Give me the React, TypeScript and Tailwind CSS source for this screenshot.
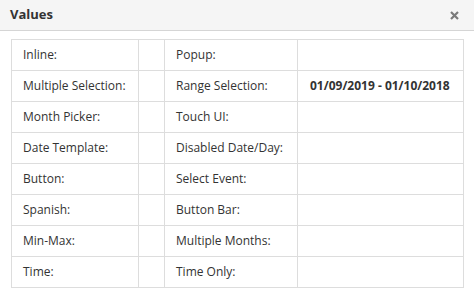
import React from "react";

const rows: [string, string, string][] = [
  ["Inline:", "Popup:", ""],
  ["Multiple Selection:", "Range Selection:", "01/09/2019 - 01/10/2018"],
  ["Month Picker:", "Touch UI:", ""],
  ["Date Template:", "Disabled Date/Day:", ""],
  ["Button:", "Select Event:", ""],
  ["Spanish:", "Button Bar:", ""],
  ["Min-Max:", "Multiple Months:", ""],
  ["Time:", "Time Only:", ""],
];

export default function App() {
  return (
    <div
      className="w-[474px] h-[295px] bg-white text-[#333333] overflow-hidden"
      style={{ fontFamily: '"Open Sans", "Noto Sans", sans-serif' }}
    >
      <div className="h-[31px] bg-[#f5f5f5] border-b border-[#d5d5d5] flex items-center justify-between pl-[10px] pr-[15px]">
        <span className="text-[13px] font-bold text-[#333333]">Values</span>
        <svg width="9" height="9" viewBox="0 0 9 9" className="mt-[1px]">
          <path d="M1 1 L8 8 M8 1 L1 8" stroke="#7a7a7a" strokeWidth="2.2" strokeLinecap="butt" />
        </svg>
      </div>
      <div className="pt-[8px] pl-[11px]">
        <table className="border-collapse text-[12px]">
          <tbody>
            {rows.map((r, i) => (
              <tr key={i} className="h-[31px]">
                <td className="w-[127px] border border-[#dddddd] py-0 pr-0 pl-[11px]">{r[0]}</td>
                <td className="w-[26px] border border-[#dddddd] p-0"></td>
                <td className="w-[133px] border border-[#dddddd] py-0 pr-0 pl-[11px]">{r[1]}</td>
                <td className="w-[166px] border border-[#dddddd] py-0 pr-0 pl-[12px] font-bold">{r[2]}</td>
              </tr>
            ))}
          </tbody>
        </table>
      </div>
    </div>
  );
}
